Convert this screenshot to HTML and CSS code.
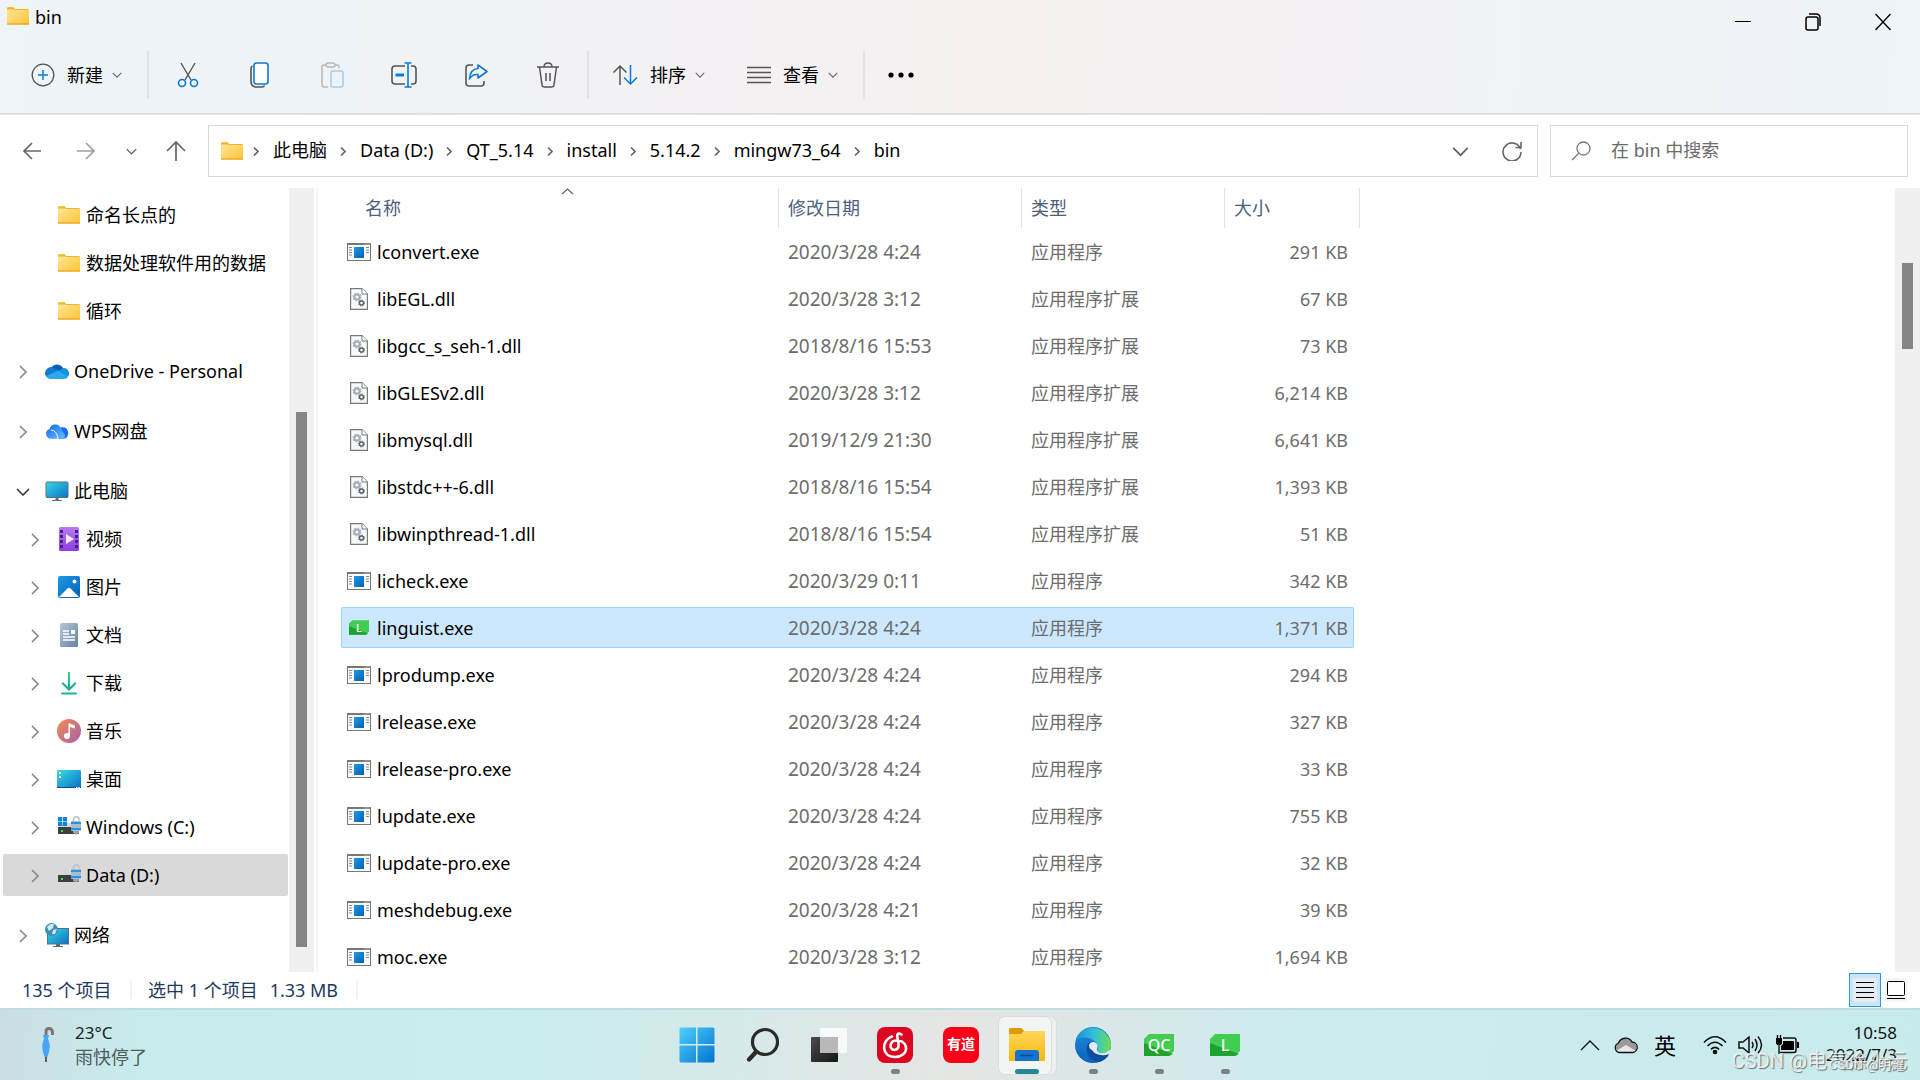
FILE: index.html
```html
<!DOCTYPE html>
<html lang="zh-CN">
<head>
<meta charset="utf-8">
<meta name="viewport" content="width=device-width, initial-scale=1">
<title>bin</title>
<link rel="stylesheet" href="styles.css">
</head>
<body>
<svg class="sprite" aria-hidden="true">
  <defs>
    <linearGradient id="g-folder" x1="0" y1="0" x2="1" y2="1"><stop offset="0" stop-color="#ffe69a"/><stop offset="1" stop-color="#fcc431"/></linearGradient>
    <linearGradient id="g-screen" x1="0" y1="0" x2="1" y2="1"><stop offset="0" stop-color="#37dbe3"/><stop offset="1" stop-color="#0b6fc6"/></linearGradient>
    <linearGradient id="g-blue" x1="0" y1="0" x2="1" y2="1"><stop offset="0" stop-color="#1c9ae6"/><stop offset="1" stop-color="#0460b4"/></linearGradient>
    <linearGradient id="g-wps" x1="0" y1="0" x2="1" y2="1"><stop offset="0" stop-color="#0a66f5"/><stop offset="1" stop-color="#6cc0ff"/></linearGradient>
    <linearGradient id="g-video" x1="0" y1="0" x2="0" y2="1"><stop offset="0" stop-color="#b77bf2"/><stop offset="1" stop-color="#8b3fe0"/></linearGradient>
    <linearGradient id="g-doc" x1="0" y1="0" x2="1" y2="1"><stop offset="0" stop-color="#b4c8dc"/><stop offset="1" stop-color="#67829f"/></linearGradient>
    <linearGradient id="g-music" x1="0" y1="0" x2="1" y2="1"><stop offset="0" stop-color="#f58f4e"/><stop offset="1" stop-color="#a85bb0"/></linearGradient>
    <linearGradient id="g-down" x1="0" y1="0" x2="0" y2="1"><stop offset="0" stop-color="#3ecf86"/><stop offset="1" stop-color="#0aa59a"/></linearGradient>
    <linearGradient id="g-win" x1="0" y1="0" x2="1" y2="1"><stop offset="0" stop-color="#4fd0fb"/><stop offset="1" stop-color="#0274d0"/></linearGradient>
    <linearGradient id="g-big" x1="0" y1="0" x2="0" y2="1"><stop offset="0" stop-color="#ffd65b"/><stop offset="1" stop-color="#fab908"/></linearGradient>
    <linearGradient id="g-edge" x1="0" y1="0" x2="1" y2="0"><stop offset="0" stop-color="#1c93dc"/><stop offset=".55" stop-color="#35c3d3"/><stop offset="1" stop-color="#6de04b"/></linearGradient>
    <linearGradient id="g-edge2" x1="0" y1="0" x2="0" y2="1"><stop offset="0" stop-color="#1b8fe0"/><stop offset="1" stop-color="#0c62b8"/></linearGradient>
    <linearGradient id="g-dark" x1="0" y1="0" x2="1" y2="1"><stop offset="0" stop-color="#4b4b4b"/><stop offset="1" stop-color="#161616"/></linearGradient>

    <symbol id="folder" viewBox="0 0 22 18"><path d="M0 1.2Q0 .3 1 .3H6.6L8.4 2.2V5H0Z" fill="#f8b418"/><rect y="2.4" width="22" height="15.2" rx=".8" fill="url(#g-folder)"/><path d="M8 2.5H21.5" stroke="#f2b62e"/><path d="M0 17H22" stroke="#eba31c" stroke-width="1.2"/></symbol>
    <symbol id="chev-r" viewBox="0 0 8 14"><path d="M1 1L7 7L1 13" fill="none" stroke="#8b8b8b" stroke-width="1.7"/></symbol>
    <symbol id="chev-d" viewBox="0 0 14 8"><path d="M1 1L7 7L13 1" fill="none" stroke="currentColor" stroke-width="1.5"/></symbol>
    <symbol id="crumb" viewBox="0 0 6 10"><path d="M1 1L5 5L1 9" fill="none" stroke="#666" stroke-width="1.7"/></symbol>
    <symbol id="exe" viewBox="0 0 24 18"><rect x=".5" y=".5" width="23" height="17" fill="#fafafa" stroke="#777"/><path d="M0 1H24" stroke="#777" stroke-width="2"/><path d="M17.5 1H22.5" stroke="#ddd" stroke-dasharray="1 1"/><rect x="7" y="4" width="10" height="11" fill="url(#g-blue)"/><path d="M2 4.5H5M2 7H5M2 9.500H5M2 12H5M19 4.500H22M19 7H22M19 9.500H22" stroke="#888"/></symbol>
    <symbol id="dll" viewBox="0 0 18 22"><path d="M.6 .6H12L17.400 6V21.400H.6Z" fill="#fafafa" stroke="#7a7a7a" stroke-width="1.200"/><path d="M12 .6V6H17.400" fill="#fff" stroke="#7a7a7a"/><circle cx="7" cy="9" r="2.600" fill="none" stroke="#a3adb8" stroke-width="2"/><circle cx="7" cy="9" r="3.900" fill="none" stroke="#a3adb8" stroke-width="1.200" stroke-dasharray="1.500 1.560"/><circle cx="11.500" cy="15" r="2" fill="#fff" stroke="#59616b" stroke-width="1.400"/><circle cx="11.500" cy="15" r="3" fill="none" stroke="#59616b" stroke-dasharray="1.200 1.150"/></symbol>
    <symbol id="leaf" viewBox="0 0 30 22"><path d="M5 0H30V17L25 22H0V5Z" fill="#41cd52"/><path d="M0 9L29 20L25 22H0Z" fill="#1fa32d"/></symbol>
    <symbol id="onedrive" viewBox="0 0 24 16"><path d="M6 5A7 7 0 0 1 18 5L21 9L12 10Z" fill="#0a5fb5"/><path d="M8 4.500A6 6 0 0 0 1.500 14L14 8Z" fill="#0f7bd6"/><path d="M18 5.200A5.200 5.200 0 0 1 22.500 14L12 9Z" fill="#1690e0"/><path d="M1.300 13L13 7.500L23 13.500Q22 16 19 16H5.500Q2.500 16 1.300 13Z" fill="#2aa8ee"/></symbol>
    <symbol id="wps" viewBox="0 0 23 16"><path d="M15 4.500Q22 3 22.700 10Q22.500 15.500 18 15.700H13Z" fill="#1c6df0"/><path d="M4 6A6 6 0 0 1 15.500 5.500L20 13Q19 15.700 16 15.700H5A5 5 0 0 1 4 6Z" fill="url(#g-wps)"/><path d="M5.500 7Q11 7 12.500 15.700" fill="none" stroke="#fff"/></symbol>
    <symbol id="pc" viewBox="0 0 24 20"><rect x="1" y="1" width="22" height="15.500" rx="1" fill="url(#g-screen)" stroke="#587187"/><path d="M10.500 17H13.500V19H17V20H7V19H10.500Z" fill="#5c6b78"/></symbol>
    <symbol id="video" viewBox="0 0 24 24"><rect x="2" width="20" height="24" rx="1.500" fill="url(#g-video)"/><path d="M4.500 3V22M19.500 3V22" stroke="#4c1f8b" stroke-width="3" stroke-dasharray="3 2"/><path d="M9 7L17 12L9 17Z" fill="#f4eefb"/></symbol>
    <symbol id="pic" viewBox="0 0 24 24"><rect x="1" y="1" width="22" height="22" rx="2" fill="url(#g-blue)"/><path d="M2 22L10.500 13.500Q12 12 13.500 13.500L22 22Z" fill="#fff"/><circle cx="17.500" cy="6.500" r="2" fill="#fff"/></symbol>
    <symbol id="doc" viewBox="0 0 24 24"><rect x="3" width="18" height="24" rx="1.500" fill="url(#g-doc)"/><path d="M6 8H12M6 11H12M6 14H18M6 17H18" stroke="#fff" stroke-width="1.300"/><rect x="14" y="7" width="4" height="4" fill="#fff"/></symbol>
    <symbol id="down" viewBox="0 0 24 24"><path d="M11 1H13V16L18 11L19.500 12.500L12 20L4.500 12.500L6 11L11 16Z" fill="url(#g-down)"/><rect x="4" y="21.500" width="16" height="2" rx="1" fill="#18b88a"/></symbol>
    <symbol id="music" viewBox="0 0 24 24"><circle cx="12" cy="12" r="12" fill="url(#g-music)"/><circle cx="10" cy="17" r="3" fill="#fff"/><path d="M11.500 17V4L18 6.500V9.500L13 8V17Z" fill="#fff"/></symbol>
    <symbol id="desk" viewBox="0 0 24 24"><rect y="3" width="24" height="18" rx="1.200" fill="url(#g-screen)"/><path d="M0 20.500H24" stroke="#08508f"/><path d="M2 5H4V7H2ZM2 9H4V11H2Z" fill="#fff"/><path d="M19 20.500H23" stroke="#fff" stroke-dasharray="1 .6"/></symbol>
    <symbol id="drive" viewBox="0 0 24 24"><path d="M4 8H20L23 13H1Z" fill="#d8d8d8"/><rect x="1" y="12" width="21" height="7" fill="#3f3f3f"/><rect x="4" y="15" width="2" height="2" fill="#37e84a"/><path d="M16.500 8V4A2.800 2.800 0 0 1 22 4V5.500" fill="none" stroke="#b7c2cc" stroke-width="1.600"/><rect x="14" y="6" width="10" height="10" rx="1" fill="#a9bccb"/><path d="M14 8H24M14 14H24" stroke="#2f92dc" stroke-width="2.200"/><path d="M16 16H22V18L19 19.500L16 18Z" fill="#8fa5b6"/></symbol>
    <symbol id="flag" viewBox="0 0 10 10"><path d="M0 0H4.600V4.600H0ZM5.400 0H10V4.600H5.400ZM0 5.400H4.600V10H0ZM5.400 5.400H10V10H5.400Z" fill="#0a84d8"/></symbol>
    <symbol id="net" viewBox="0 0 24 24"><rect x="2.500" y="5.500" width="21" height="15.500" fill="url(#g-screen)" stroke="#587187"/><path d="M11 21H15V23H18V24H8V23H11Z" fill="#5c6b78"/><circle cx="6.500" cy="6.500" r="6.500" fill="#3b8fb8"/><path d="M2 4Q5 0 9 1L8 5L4 8ZM8 7L12 6L10 11L7 11Z" fill="#cfe8f3"/></symbol>
  </defs>
</svg>

<main class="window">
  <div class="chrome">
    <header class="titlebar">
      <svg class="i-folder"><use href="#folder"/></svg>
      <h1 class="title">bin</h1>
      <div class="win-buttons">
        <button aria-label="最小化"><svg width="16" height="18"><path d="M0 8.500H16" stroke="#000"/></svg></button>
        <button aria-label="还原"><svg width="16" height="18" fill="none" stroke="#000" stroke-width="1.500"><rect x="1" y="4" width="12" height="13" rx="2"/><path d="M4 1H11Q15 1 15 5V13"/></svg></button>
        <button aria-label="关闭"><svg width="16" height="18"><path d="M.5 1L15.500 17M15.500 1L.5 17" stroke="#000" stroke-width="1.300"/></svg></button>
      </div>
    </header>
    <div class="toolbar">
      <button class="tool-text tool-new"><svg width="24" height="24" fill="none"><circle cx="12" cy="12" r="10.800" stroke="#555" stroke-width="1.300"/><path d="M12 7V17M7 12H17" stroke="#0a7ad6" stroke-width="1.500"/></svg><span>新建</span><svg class="i-mini"><use href="#chev-d"/></svg></button>
      <span class="sep"></span>
      <div class="tool-group">
        <button class="tool" aria-label="剪切"><svg width="24" height="26" fill="none" stroke="#555" stroke-width="1.400"><path d="M5 1L15 18M19 1L9 18"/><g stroke="#0a7ad6" stroke-width="1.600"><circle cx="6" cy="21" r="3.500"/><circle cx="18" cy="21" r="3.500"/></g></svg></button>
        <button class="tool" aria-label="复制"><svg width="24" height="26" fill="none" stroke-width="1.600"><path d="M4.500 4Q3 4.500 3 6.500V19Q3 25 8 25H14Q16 25 16.500 23.500" stroke="#555"/><rect x="6" y="1" width="14" height="21" rx="2.500" stroke="#0a7ad6" fill="#fff"/></svg></button>
        <button class="tool" aria-label="粘贴"><svg width="24" height="26" fill="none" stroke-width="1.500"><path d="M8 25H4Q2 25 2 23V5Q2 3 4 3H6M15 3H17Q19 3 19 5V6" stroke="#b9b9b9"/><rect x="6" y="1" width="9" height="4" rx="2" stroke="#b9b9b9"/><rect x="11" y="9" width="12" height="16" rx="2" stroke="#a3cdf0"/></svg></button>
        <button class="tool" aria-label="重命名"><svg width="26" height="26" fill="none" stroke-width="1.600"><path d="M14 4H4Q1 4 1 7V19Q1 22 4 22H14M20 4H22Q25 4 25 7V19Q25 22 22 22H20" stroke="#555"/><path d="M17 1V25M13.500 1H20.500M13.500 25H20.500" stroke="#0a7ad6"/><path d="M4.500 13H13" stroke="#0a7ad6" stroke-width="3"/></svg></button>
        <button class="tool" aria-label="共享"><svg width="24" height="26" fill="none" stroke-width="1.600" stroke-linejoin="round"><path d="M9 3H5Q2 3 2 6V21Q2 24 5 24H17Q20 24 20 21V19" stroke="#555"/><path d="M14 3L23 9.500L14 16V12.500Q8 12 5.500 17Q6 7 14 6.500Z" stroke="#0a7ad6"/></svg></button>
        <button class="tool" aria-label="删除"><svg width="24" height="26" fill="none" stroke="#555" stroke-width="1.500"><path d="M1 5H23M8 5Q8 1 12 1T16 5M3.500 5L6 23Q6.300 25 8.500 25H15.500Q17.700 25 18 23L20.500 5M10 11V19M14 11V19"/></svg></button>
      </div>
      <span class="sep"></span>
      <button class="tool-text tool-sort"><svg width="26" height="22" fill="none" stroke-width="1.500"><path d="M8 21V2M1.500 8.500L8 2L14.500 8.500" stroke="#555"/><path d="M18.500 1V20M12 13.500L18.500 20L25 13.500" stroke="#0a7ad6"/></svg><span>排序</span><svg class="i-mini"><use href="#chev-d"/></svg></button>
      <button class="tool-text tool-view"><svg width="24" height="18"><path d="M0 1.500H24M0 6.500H24M0 11.500H24M0 16.500H24" stroke="#555" stroke-width="1.300"/></svg><span>查看</span><svg class="i-mini"><use href="#chev-d"/></svg></button>
      <span class="sep"></span>
      <button class="tool" aria-label="更多"><svg width="26" height="6"><circle cx="3" cy="3" r="2.600"/><circle cx="13" cy="3" r="2.600"/><circle cx="23" cy="3" r="2.600"/></svg></button>
    </div>
  </div>

  <div class="navbar">
    <nav class="nav-buttons">
      <button aria-label="后退"><svg width="18" height="18" fill="none" stroke="#666" stroke-width="1.700"><path d="M18 9H1M9 1L1 9L9 17"/></svg></button>
      <button aria-label="前进"><svg width="18" height="18" fill="none" stroke="#a0a0a0" stroke-width="1.700"><path d="M0 9H17M9 1L17 9L9 17"/></svg></button>
      <button class="narrow" aria-label="最近的位置"><svg class="i-recent"><use href="#chev-d"/></svg></button>
      <button aria-label="向上"><svg width="20" height="20" fill="none" stroke="#666" stroke-width="1.700"><path d="M10 20V1M1 10L10 1L19 10"/></svg></button>
    </nav>
    <div class="address">
      <svg class="i-folder"><use href="#folder"/></svg>
      <svg class="i-crumb"><use href="#crumb"/></svg><a href="#">此电脑</a>
      <svg class="i-crumb"><use href="#crumb"/></svg><a href="#">Data (D:)</a>
      <svg class="i-crumb"><use href="#crumb"/></svg><a href="#">QT_5.14</a>
      <svg class="i-crumb"><use href="#crumb"/></svg><a href="#">install</a>
      <svg class="i-crumb"><use href="#crumb"/></svg><a href="#">5.14.2</a>
      <svg class="i-crumb"><use href="#crumb"/></svg><a href="#">mingw73_64</a>
      <svg class="i-crumb"><use href="#crumb"/></svg><a href="#">bin</a>
      <div class="address-actions">
        <button aria-label="历史记录"><svg class="i-history"><use href="#chev-d"/></svg></button>
        <button aria-label="刷新"><svg width="20" height="20" fill="none" stroke="#666" stroke-width="1.600"><path d="M18.500 8A9 9 0 1 0 19 11M19 1V6.500H13.500"/></svg></button>
      </div>
    </div>
    <label class="search">
      <svg width="20" height="20" fill="none" stroke="#777" stroke-width="1.300"><circle cx="12.500" cy="7.500" r="6.500"/><path d="M8 12L1 19"/></svg>
      <input type="search" placeholder="在 bin 中搜索" aria-label="在 bin 中搜索">
    </label>
  </div>

  <div class="content">
    <nav class="sidebar">
      <ul class="tree">
        <li class="node sub"><svg class="tw i-fold"><use href="#folder"/></svg><a href="#">命名长点的</a></li>
        <li class="node sub"><svg class="tw i-fold"><use href="#folder"/></svg><a href="#">数据处理软件用的数据</a></li>
        <li class="node sub"><svg class="tw i-fold"><use href="#folder"/></svg><a href="#">循环</a></li>
        <li class="node top"><svg class="arrow"><use href="#chev-r"/></svg><svg class="tw i-cloud"><use href="#onedrive"/></svg><a href="#">OneDrive - Personal</a></li>
        <li class="node top"><svg class="arrow"><use href="#chev-r"/></svg><svg class="tw i-cloud"><use href="#wps"/></svg><a href="#">WPS网盘</a></li>
        <li class="node top"><svg class="arrow open"><use href="#chev-d"/></svg><svg class="tw i-pc"><use href="#pc"/></svg><a href="#">此电脑</a></li>
        <li class="node sub"><svg class="arrow"><use href="#chev-r"/></svg><svg class="tw"><use href="#video"/></svg><a href="#">视频</a></li>
        <li class="node sub"><svg class="arrow"><use href="#chev-r"/></svg><svg class="tw"><use href="#pic"/></svg><a href="#">图片</a></li>
        <li class="node sub"><svg class="arrow"><use href="#chev-r"/></svg><svg class="tw"><use href="#doc"/></svg><a href="#">文档</a></li>
        <li class="node sub"><svg class="arrow"><use href="#chev-r"/></svg><svg class="tw"><use href="#down"/></svg><a href="#">下载</a></li>
        <li class="node sub"><svg class="arrow"><use href="#chev-r"/></svg><svg class="tw"><use href="#music"/></svg><a href="#">音乐</a></li>
        <li class="node sub"><svg class="arrow"><use href="#chev-r"/></svg><svg class="tw"><use href="#desk"/></svg><a href="#">桌面</a></li>
        <li class="node sub"><svg class="arrow"><use href="#chev-r"/></svg><svg class="tw"><use href="#drive"/><use href="#flag" x="1" y="2" width="9" height="9"/></svg><a href="#">Windows (C:)</a></li>
        <li class="node sub current"><svg class="arrow"><use href="#chev-r"/></svg><svg class="tw"><use href="#drive"/></svg><a href="#">Data (D:)</a></li>
        <li class="node top"><svg class="arrow"><use href="#chev-r"/></svg><svg class="tw"><use href="#net"/></svg><a href="#">网络</a></li>
      </ul>
      <div class="scroll scroll-side"><div class="thumb"></div></div>
    </nav>

    <section class="files">
      <table class="list">
        <thead>
          <tr><th>名称<svg class="i-sort"><path d="M1 6L6.500 1L12 6" fill="none" stroke="#666" stroke-width="1.200"/></svg></th><th>修改日期</th><th>类型</th><th>大小</th></tr>
        </thead>
        <tbody>
          <tr><td><svg class="exe"><use href="#exe"/></svg>lconvert.exe</td><td>2020/3/28 4:24</td><td>应用程序</td><td>291 KB</td></tr>
          <tr><td><svg class="dll"><use href="#dll"/></svg>libEGL.dll</td><td>2020/3/28 3:12</td><td>应用程序扩展</td><td>67 KB</td></tr>
          <tr><td><svg class="dll"><use href="#dll"/></svg>libgcc_s_seh-1.dll</td><td>2018/8/16 15:53</td><td>应用程序扩展</td><td>73 KB</td></tr>
          <tr><td><svg class="dll"><use href="#dll"/></svg>libGLESv2.dll</td><td>2020/3/28 3:12</td><td>应用程序扩展</td><td>6,214 KB</td></tr>
          <tr><td><svg class="dll"><use href="#dll"/></svg>libmysql.dll</td><td>2019/12/9 21:30</td><td>应用程序扩展</td><td>6,641 KB</td></tr>
          <tr><td><svg class="dll"><use href="#dll"/></svg>libstdc++-6.dll</td><td>2018/8/16 15:54</td><td>应用程序扩展</td><td>1,393 KB</td></tr>
          <tr><td><svg class="dll"><use href="#dll"/></svg>libwinpthread-1.dll</td><td>2018/8/16 15:54</td><td>应用程序扩展</td><td>51 KB</td></tr>
          <tr><td><svg class="exe"><use href="#exe"/></svg>licheck.exe</td><td>2020/3/29 0:11</td><td>应用程序</td><td>342 KB</td></tr>
          <tr class="selected"><td><span class="leaf-small"><svg><use href="#leaf"/></svg><b>L</b></span>linguist.exe</td><td>2020/3/28 4:24</td><td>应用程序</td><td>1,371 KB</td></tr>
          <tr><td><svg class="exe"><use href="#exe"/></svg>lprodump.exe</td><td>2020/3/28 4:24</td><td>应用程序</td><td>294 KB</td></tr>
          <tr><td><svg class="exe"><use href="#exe"/></svg>lrelease.exe</td><td>2020/3/28 4:24</td><td>应用程序</td><td>327 KB</td></tr>
          <tr><td><svg class="exe"><use href="#exe"/></svg>lrelease-pro.exe</td><td>2020/3/28 4:24</td><td>应用程序</td><td>33 KB</td></tr>
          <tr><td><svg class="exe"><use href="#exe"/></svg>lupdate.exe</td><td>2020/3/28 4:24</td><td>应用程序</td><td>755 KB</td></tr>
          <tr><td><svg class="exe"><use href="#exe"/></svg>lupdate-pro.exe</td><td>2020/3/28 4:24</td><td>应用程序</td><td>32 KB</td></tr>
          <tr><td><svg class="exe"><use href="#exe"/></svg>meshdebug.exe</td><td>2020/3/28 4:21</td><td>应用程序</td><td>39 KB</td></tr>
          <tr><td><svg class="exe"><use href="#exe"/></svg>moc.exe</td><td>2020/3/28 3:12</td><td>应用程序</td><td>1,694 KB</td></tr>
        </tbody>
      </table>
    </section>
    <div class="scroll scroll-main"><div class="thumb"></div></div>
  </div>

  <footer class="status">
    <span class="count">135 个项目</span>
    <span class="picked">选中 1 个项目<span>1.33 MB</span></span>
    <div class="view-buttons">
      <button class="on" aria-label="详细信息"><svg width="24" height="24"><rect width="24" height="24" rx="2" fill="#e3edf3"/><path d="M3 4.500H21M3 9.500H21M3 14.500H21M3 19.500H21" stroke="#000"/></svg></button>
      <button aria-label="大图标"><svg width="24" height="24"><rect width="24" height="24" rx="2" fill="#f6f6f6"/><rect x="3.500" y="3.500" width="17" height="14" rx="1" fill="#fff" stroke="#000"/><path d="M3 20.500H21" stroke="#000"/></svg></button>
    </div>
  </footer>
</main>

<footer class="taskbar">
  <a class="weather" href="#">
    <svg width="14" height="36"><path d="M5 9V5Q5 1.500 8 1.500T11.500 5V8" fill="none" stroke="#7d7672" stroke-width="3"/><path d="M2 8H8L7 12Q11 19 6 31H4Q-1 19 3 12Z" fill="#47a4f7"/><path d="M5 30V35" stroke="#5d5d5d" stroke-width="2"/></svg>
    <span class="weather-text"><span>23°C</span><small>雨快停了</small></span>
  </a>
  <div class="apps">
    <button aria-label="开始"><svg width="36" height="36"><path d="M.5 2Q.5 .5 2 .5H17V17H.5ZM18.500 .5H34Q35.500 .5 35.500 2V17H18.500ZM.5 18.500H17V35.500H2Q.5 35.500 .5 34ZM18.500 18.500H35.500V34Q35.500 35.500 34 35.500H18.500Z" fill="url(#g-win)"/></svg></button>
    <button aria-label="搜索"><svg width="36" height="36" fill="none" stroke="#2b2b2b" stroke-linecap="round"><circle cx="20" cy="15" r="12.500" stroke-width="3.200"/><path d="M11 25L4 32.500" stroke-width="4.400"/></svg></button>
    <button aria-label="任务视图"><svg width="36" height="36"><rect y="10" width="27" height="25" rx="1" fill="url(#g-dark)"/><rect x="9" y="1" width="27" height="25" rx="1" fill="#fff" fill-opacity=".8"/><rect x="9" y="10" width="18" height="16" fill="#b9b9b9"/></svg></button>
    <button class="running" aria-label="网易云音乐"><svg width="36" height="36" fill="none"><rect width="36" height="36" rx="8" fill="#dd0620"/><path d="M15 9.500C4 13 4 30 18 30C32 30 32.500 14.500 21 13.500C12 13 11.500 22.500 17.500 23C23 22.500 22 16 20.500 11C19.500 6.500 21.500 5.500 24.500 7.500" stroke="#fff" stroke-width="2.600" stroke-linecap="round"/></svg></button>
    <button aria-label="有道"><span class="youdao">有道</span></button>
    <button class="running active" aria-label="文件资源管理器"><svg width="36" height="34"><path d="M0 2Q0 0 2 0H12L16 4V9H0Z" fill="#dc9b0c"/><rect y="3" width="36" height="30" rx="1" fill="url(#g-big)"/><path d="M0 2Q0 0 2 0H12L15 3L12 6H0Z" fill="#dc9b0c"/><path d="M6 33V25Q6 22 9 22H27Q30 22 30 25V33Z" fill="#1574cf"/><path d="M11 27.500H25" stroke="#084b96" stroke-width="1.500"/></svg></button>
    <button class="running" aria-label="Edge"><svg width="36" height="36"><circle cx="18" cy="18" r="18" fill="url(#g-edge2)"/><path d="M1 13C5 -2 30 -5 36 16C37 25 28 28 22 25C22 22 24 21 22 17C19 11 7 8 1 13Z" fill="url(#g-edge)"/><path d="M14 15C9 22 12 33 24 35C29 34 33 30 34 27C28 30 20 27 18 22Z" fill="#0d4f9f"/><path d="M14 18A4.500 4.500 0 0 1 22 17C24 21 20 22 23 25C27 28 32 25 36 22L34 27C27 30 19 27 17 23Q14 22 14 18Z" fill="#e3edee"/></svg></button>
    <button class="running" aria-label="Qt Creator"><span class="leaf-big"><svg><use href="#leaf"/></svg><b>QC</b></span></button>
    <button class="running" aria-label="Qt Linguist"><span class="leaf-big"><svg><use href="#leaf"/></svg><b>L</b></span></button>
  </div>
  <div class="tray">
    <button aria-label="显示隐藏的图标"><svg width="20" height="12"><path d="M1 11L10 2L19 11" fill="none" stroke="#111" stroke-width="1.400"/></svg></button>
    <button aria-label="OneDrive"><svg width="26" height="18"><path d="M7 16.500A5 5 0 0 1 6 7A7.500 7.500 0 0 1 19 6A5.500 5.500 0 0 1 20 16.500Z" fill="#9a9a9a"/><path d="M3 15L13 9L23 15L20 17H6Z" fill="#e8e8e8"/><path d="M6 16.500A5 5 0 0 1 5.500 7A7.500 7.500 0 0 1 19 6A5.300 5.300 0 0 1 20 16.500Z" fill="none" stroke="#111" stroke-width="1.300"/></svg></button>
    <button class="ime">英</button>
    <button class="system" aria-label="网络、音量、电池">
      <svg width="24" height="20" fill="none" stroke="#111" stroke-width="1.600"><path d="M1 7.500Q12 -4 23 7.500M4.500 11Q12 3.500 19.500 11M8 14.300Q12 10.500 16 14.300"/><circle cx="12" cy="17" r="1.500" fill="#111"/></svg>
      <svg width="26" height="20" fill="none" stroke="#111" stroke-width="1.500"><path d="M1 7H5L11 2V18L5 13H1ZM14 7Q16 10 14 13M17 4Q21 10 17 16M20 1.500Q27 10 20 18.500"/></svg>
      <svg width="24" height="20"><path d="M8 3H19Q21 3 21 5V15Q21 17.500 19 17.500H5" fill="none" stroke="#111" stroke-width="1.500"/><path d="M1 3H7V8Q7 10 4 10T1 8ZM22 7H24V13H22ZM8 6H19V15H6V11L8 9Z"/><path d="M2.500 0V4M5.500 0V4M4 9V19" stroke="#111" stroke-width="1.400"/></svg>
    </button>
    <time class="clock" datetime="2022-07-03T10:58"><span>10:58</span><span>2022/7/3</span></time>
  </div>
  <span class="mark mark-large">CSDN @电气徐小沅</span>
  <span class="mark mark-small">CSDN @明耀</span>
</footer>
</body>
</html>
```
FILE: styles.css
```css
* { box-sizing: border-box; }

body {
  margin: 0;
  height: 100vh;
  display: flex;
  flex-direction: column;
  overflow: hidden;
  background: #fff;
  color: #000;
  font: 18px/24px "Noto Sans", "Noto Sans CJK SC", sans-serif;
  white-space: nowrap;
}

button {
  display: flex;
  align-items: center;
  justify-content: center;
  padding: 0;
  border: 0;
  background: none;
  color: inherit;
  font: inherit;
}

a { color: inherit; text-decoration: none; }
svg { flex: none; display: block; }
.sprite { position: absolute; width: 0; height: 0; }

.window {
  flex: 1;
  min-height: 0;
  display: flex;
  flex-direction: column;
}

/* Title bar and commands */
.chrome {
  border-bottom: 2px solid #dfe0e1;
  background: linear-gradient(95deg, #eff4f8 0%, #eff3f6 20%, #f4f1f4 38%, #f6f1f0 52%, #f4f1f4 68%, #f1f3f5 78%, #eff4f8 100%);
}

.titlebar {
  display: flex;
  align-items: flex-start;
  height: 43px;
  padding: 0 2px 0 7px;
}

.i-folder { width: 22px; height: 18px; }
.titlebar .i-folder { margin-top: 7px; }
.title { flex: 1; margin: 5px 0 0 6px; font-size: 18px; font-weight: 400; }
.win-buttons { display: flex; }
.win-buttons button { width: 70px; height: 43px; }

.toolbar {
  display: flex;
  align-items: center;
  height: 70px;
  padding: 0 0 6px 31px;
}

.sep { width: 2px; height: 48px; background: #e2e3e5; }
.tool-group { display: flex; padding: 0 3px; }
.tool { width: 72px; height: 48px; }
.tool-text span { margin: 0 9px 0 12px; }
.tool-new { margin-right: 25px; }
.tool-sort { margin: 0 42px 0 23px; }
.tool-view { margin-right: 25px; }
.i-mini { width: 10px; height: 6px; color: #666; }

/* Address row */
.navbar {
  display: flex;
  align-items: center;
  padding: 10px 12px 11px 5px;
}

.nav-buttons { display: flex; margin-right: 5px; }
.nav-buttons button { width: 54px; height: 52px; }
.nav-buttons .narrow { width: 36px; }
.i-recent { width: 11px; height: 7px; color: #555; }

.address {
  flex: 1;
  display: flex;
  align-items: center;
  height: 52px;
  margin-right: 12px;
  padding-left: 12px;
  border: 1px solid #d9d9d9;
}

.address a, .search input { margin-bottom: 2px; }
.i-crumb { width: 6px; height: 11px; margin: 0 14px 0 13px; }
.i-folder + .i-crumb { margin-left: 10px; }
.address-actions { display: flex; margin-left: auto; }
.address-actions button { width: 51px; height: 50px; }
.i-history { width: 17px; height: 11px; color: #666; }

.search {
  width: 358px;
  height: 52px;
  display: flex;
  align-items: center;
  gap: 20px;
  padding: 0 20px;
  border: 1px solid #d9d9d9;
}

.search input {
  flex: 1;
  min-width: 0;
  padding: 0;
  border: 0;
  outline: 0;
  background: none;
  font: inherit;
}

.search input::placeholder { color: #6b6b6b; opacity: 1; }

/* Folder tree */
.content { flex: 1; min-height: 0; display: flex; }
.sidebar { display: flex; width: 318px; border-right: 2px solid #f6f6f6; }

.tree {
  flex: 1;
  display: flex;
  flex-direction: column;
  gap: 6px;
  margin: 0;
  padding: 6px 1px 0 3px;
  list-style: none;
}

.node {
  display: flex;
  align-items: center;
  height: 42px;
  padding-left: 54px;
  border-radius: 2px;
}

.node.top { margin-top: 12px; padding-left: 42px; }
.tw { width: 24px; height: 24px; margin-right: 5px; }
.i-fold { height: 18px; }
.i-cloud { height: 16px; }
.i-pc { height: 20px; }
.current { background: #d9d9d9; }
.arrow { width: 8px; height: 14px; margin: 2px 18px 0 -26px; }
.arrow.open { width: 14px; height: 8px; margin: 2px 15px 0 -29px; color: #333; }

.scroll { width: 25px; background: #f0f0f0; }
.thumb { width: 11px; margin-left: 7px; background: #858585; }
.scroll-side { margin-right: 2px; padding-top: 224px; }
.scroll-side .thumb { height: 535px; }
.scroll-main { padding-top: 75px; }
.scroll-main .thumb { height: 86px; }

/* File list */
.files { flex: 1; overflow: hidden; padding-left: 23px; }
.list, .list thead, .list tbody { display: block; }
.list tr { display: grid; align-items: center; grid-template-columns: 438px 243px 203px 129px; }
.list thead tr { grid-template-columns: 438px 243px 203px 135px; }

.list th {
  position: relative;
  height: 40px;
  padding: 8px 0 8px 9px;
  border-right: 1px solid #e2e2e2;
  color: #4c607a;
  font-weight: 400;
  text-align: left;
}

.list th:first-child { padding-left: 24px; }
.i-sort { position: absolute; top: 0; left: 220px; width: 13px; height: 7px; }

.list tbody { padding-top: 3px; }
.list tbody tr { width: 1013px; height: 41px; margin-bottom: 6px; }
.list td { padding: 0 0 0 9px; color: #6d6d6d; }
.list td:first-child { display: flex; align-items: center; padding-left: 6px; color: #000; }
.list td:nth-child(2) { font-size: 19px; }
.list td:last-child { padding-right: 6px; text-align: right; }
.list .selected { border-radius: 2px; background: #cce8ff; box-shadow: inset 0 0 0 1px #99d1ff; }

.exe { width: 24px; height: 18px; margin-right: 6px; }
.dll { width: 18px; height: 22px; margin: 0 9px 0 3px; }

.leaf-small, .leaf-big { display: grid; place-items: center; color: #fff; }
.leaf-small > *, .leaf-big > * { grid-area: 1 / 1; }
.leaf-small { margin: 0 8px 0 2px; }
.leaf-small svg { width: 20px; height: 15px; }
.leaf-small b { font-size: 11px; line-height: 15px; font-weight: 500; }
.leaf-big svg { width: 30px; height: 22px; }
.leaf-big b { font-size: 16px; line-height: 22px; font-weight: 500; }

/* Status bar */
.status {
  display: flex;
  align-items: center;
  height: 36px;
  padding: 0 12px 0 22px;
  color: #1e395b;
}

.count { width: 110px; margin-right: 16px; border-right: 2px solid #f2f2f2; line-height: 18px; }
.picked { width: 210px; border-right: 2px solid #f2f2f2; line-height: 18px; }
.picked span { margin-left: 12px; }
.view-buttons { display: flex; align-items: center; gap: 3px; margin-left: auto; }
.view-buttons .on { width: 32px; height: 34px; border: 1px solid #2a9bd8; background: #c9e6f6; }

/* Taskbar */
.taskbar {
  position: relative;
  z-index: 0;
  display: grid;
  grid-template-columns: 1fr auto 1fr;
  align-items: center;
  height: 72px;
  border-top: 2px solid #bfdcde;
  background: linear-gradient(95deg, #cbdde3 0%, #c8ebec 7%, #caeded 28%, #d6e9ea 38%, #e5e6e3 50%, #d8e7e9 59%, #cdecef 67%, #c8ebec 100%);
}

.weather { display: flex; align-items: center; gap: 20px; padding-left: 41px; margin-right: auto; }
.weather-text span, .weather-text small { display: block; }
.weather-text span { font-size: 17px; color: #1c2526; }
.weather-text small { font-size: 18px; color: #4c5d5e; }

.apps { display: flex; padding-left: 2px; }
.apps button { position: relative; width: 66px; height: 70px; }

.running::after {
  content: "";
  position: absolute;
  bottom: 6px;
  left: 29px;
  width: 9px;
  height: 5px;
  border-radius: 3px;
  background: #7c8182;
}

.active::after { left: 21px; width: 24px; background: #26869a; }

.active::before {
  content: "";
  position: absolute;
  z-index: -1;
  top: 7px;
  left: 5px;
  width: 52px;
  height: 57px;
  border-radius: 6px;
  background: #f3f5f5;
  box-shadow: 0 0 0 1px #d9dddd, 5px 0 0 #eef1f1, 6px 0 0 #d9dddd;
}

.youdao {
  width: 36px;
  height: 36px;
  border-radius: 8px;
  background: #fb0119;
  color: #fff;
  font-size: 14px;
  line-height: 34px;
  font-weight: 700;
}

.tray { display: flex; align-items: center; margin-left: auto; padding-right: 23px; }
.tray button + button { margin-left: 13px; }
.tray button + .ime { margin-left: 15px; font-size: 22px; }
.tray button + .system { gap: 11px; margin-left: 27px; }
.clock { width: 72px; margin: 0 0 2px 26px; font-size: 17px; line-height: 22px; text-align: right; color: #111; }
.clock span { display: block; }

.mark {
  position: absolute;
  color: #ffffffcc;
  text-shadow: 1px 1px 1px #555c;
  font-family: Roboto, "Noto Sans CJK SC", sans-serif;
  pointer-events: none;
}

.mark-large { right: 13px; bottom: 7px; font-size: 20px; }
.mark-small { right: 16px; bottom: 3px; font-size: 13px; }
```
